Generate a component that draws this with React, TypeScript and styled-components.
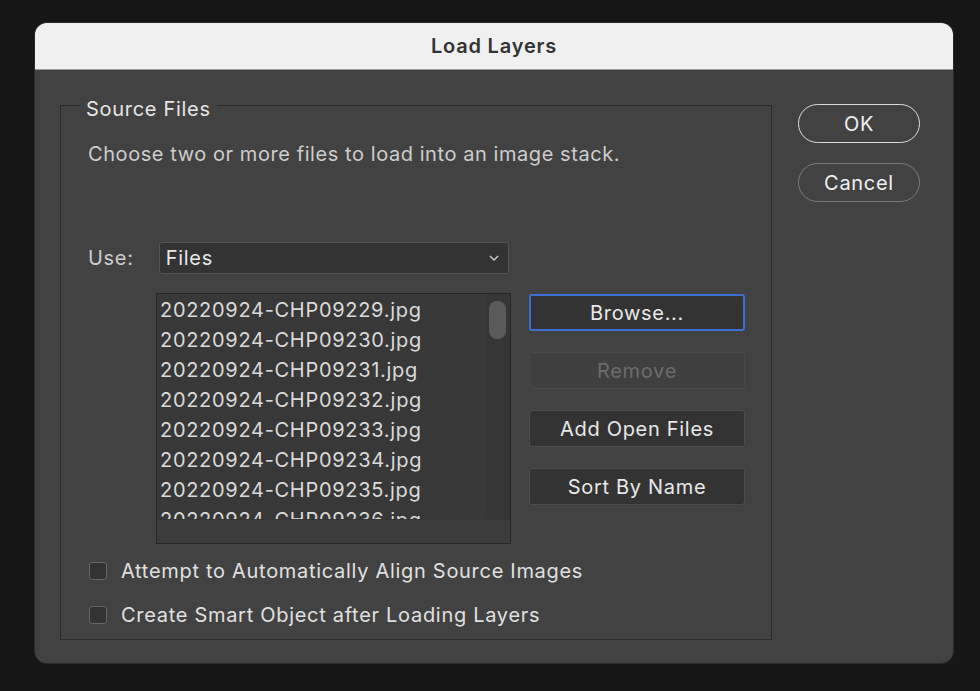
import React from "react";
import styled, { createGlobalStyle } from "styled-components";

const Global = createGlobalStyle`
  html, body { margin: 0; padding: 0; background: #161616; }
  body { font-family: Inter, "Liberation Sans", Arial, sans-serif; letter-spacing: 0.7px; }
`;

const Screen = styled.div`
  width: 980px;
  height: 691px;
  background: #161616;
  padding: 23px 27px 28px 35px;
  box-sizing: border-box;
`;

const Dialog = styled.div`
  width: 918px;
  height: 640px;
  border-radius: 12px;
  overflow: hidden;
  background: #424242;
  display: flex;
  flex-direction: column;
  box-shadow: 0 0 0 1px #2a2a2a;
`;

const TitleBar = styled.div`
  height: 46px;
  background: #f0f0f0;
  border-bottom: 1px solid #9a9a9a;
  display: flex;
  align-items: center;
  justify-content: center;
  font-weight: 600;
  font-size: 20px;
  letter-spacing: 0.8px;
  color: #333;
  flex-shrink: 0;
`;

const Body = styled.div`
  display: flex;
  padding: 20px 33px 0 25px;
  gap: 26px;
`;

const Group = styled.fieldset`
  margin: 0;
  width: 713px;
  height: 550px;
  box-sizing: border-box;
  border: 1px solid #2c2c2c;
  padding: 0;
`;

const Legend = styled.legend`
  padding: 7px 6px 0;
  margin-left: 19px;
  font-size: 20px;
  color: #e6e6e6;
  line-height: 24px;
`;

const Content = styled.div`
  padding-left: 27px;
  display: flex;
  flex-direction: column;
`;

const Description = styled.div`
  font-size: 20px;
  letter-spacing: 0.57px;
  color: #cdcdcd;
  margin-top: 21px;
  line-height: 24px;
`;

const UseRow = styled.div`
  display: flex;
  align-items: center;
  margin-top: 76px;
  gap: 25px;
`;

const Label = styled.span`
  font-size: 20px;
  color: #cdcdcd;
`;

const Select = styled.div`
  width: 350px;
  height: 32px;
  box-sizing: border-box;
  background: #333333;
  border: 1px solid #555;
  border-radius: 3px;
  display: flex;
  align-items: center;
  justify-content: space-between;
  padding: 0 8px 0 6px;
  font-size: 20px;
  color: #e8e8e8;
`;

const FilesRow = styled.div`
  display: flex;
  margin-top: 19px;
  margin-left: 68px;
  gap: 18px;
`;

const List = styled.div`
  width: 355px;
  height: 251px;
  box-sizing: border-box;
  background: #383838;
  border: 1px solid #272727;
  display: grid;
  grid-template-columns: 1fr 24px;
  grid-template-rows: 1fr 24px;
`;

const Items = styled.div`
  overflow: hidden;
  padding: 1px 0 0 3px;
`;

const Item = styled.div`
  font-size: 20px;
  line-height: 30px;
  color: #dadada;
  white-space: nowrap;
`;

const VTrack = styled.div`
  background: #363636;
  padding: 7px 4px 0 3px;
`;

const Thumb = styled.div`
  height: 38px;
  border-radius: 8px;
  background: #5b5b5b;
`;

const HTrack = styled.div`
  grid-column: 1 / 3;
  background: #3c3c3c;
  border-top: 1px solid #363636;
`;

const ButtonCol = styled.div`
  display: flex;
  flex-direction: column;
  gap: 21px;
  padding-top: 1px;
`;

const SideButton = styled.div<{ $focus?: boolean; $disabled?: boolean }>`
  width: 216px;
  height: 37px;
  box-sizing: border-box;
  border-radius: 3px;
  display: flex;
  align-items: center;
  justify-content: center;
  font-size: 20px;
  background: ${(p) => (p.$disabled ? "#404040" : "#333333")};
  color: ${(p) => (p.$disabled ? "#6c6c6c" : "#e8e8e8")};
  border: ${(p) =>
    p.$focus ? "2px solid #3b6fd4" : p.$disabled ? "1px solid #4a4a4a" : "1px solid #4d4d4d"};
`;

const Checks = styled.div`
  display: flex;
  flex-direction: column;
  gap: 22px;
  margin-top: 16px;
`;

const CheckRow = styled.label`
  display: flex;
  align-items: center;
  gap: 14px;
  font-size: 20px;
  line-height: 22px;
  color: #e0e0e0;
  margin-left: 1px;
`;

const Box = styled.span`
  width: 18px;
  height: 18px;
  box-sizing: border-box;
  border: 1px solid #666;
  border-radius: 3px;
  background: #333;
`;

const RightCol = styled.div`
  display: flex;
  flex-direction: column;
  gap: 20px;
  padding-top: 14px;
`;

const PillButton = styled.div<{ $primary?: boolean }>`
  width: 122px;
  height: 39px;
  box-sizing: border-box;
  border-radius: 20px;
  border: ${(p) => (p.$primary ? "1.5px solid #dcdcdc" : "1px solid #7a7a7a")};
  display: flex;
  align-items: center;
  justify-content: center;
  font-size: 20px;
  color: #f0f0f0;
`;

const files = [
  "20220924-CHP09229.jpg",
  "20220924-CHP09230.jpg",
  "20220924-CHP09231.jpg",
  "20220924-CHP09232.jpg",
  "20220924-CHP09233.jpg",
  "20220924-CHP09234.jpg",
  "20220924-CHP09235.jpg",
  "20220924-CHP09236.jpg",
];

export default function App() {
  return (
    <>
      <Global />
      <Screen>
        <Dialog>
          <TitleBar>Load Layers</TitleBar>
          <Body>
            <Group>
              <Legend>Source Files</Legend>
              <Content>
                <Description>Choose two or more files to load into an image stack.</Description>
                <UseRow>
                  <Label>Use:</Label>
                  <Select>
                    <span>Files</span>
                    <svg width="12" height="8" viewBox="0 0 12 8">
                      <path d="M2 2l4 4 4-4" fill="none" stroke="#cfcfcf" strokeWidth="1.4" />
                    </svg>
                  </Select>
                </UseRow>
                <FilesRow>
                  <List>
                    <Items>
                      {files.map((f) => (
                        <Item key={f}>{f}</Item>
                      ))}
                    </Items>
                    <VTrack>
                      <Thumb />
                    </VTrack>
                    <HTrack />
                  </List>
                  <ButtonCol>
                    <SideButton $focus>Browse...</SideButton>
                    <SideButton $disabled>Remove</SideButton>
                    <SideButton>Add Open Files</SideButton>
                    <SideButton>Sort By Name</SideButton>
                  </ButtonCol>
                </FilesRow>
                <Checks>
                  <CheckRow>
                    <Box />
                    Attempt to Automatically Align Source Images
                  </CheckRow>
                  <CheckRow>
                    <Box />
                    Create Smart Object after Loading Layers
                  </CheckRow>
                </Checks>
              </Content>
            </Group>
            <RightCol>
              <PillButton $primary>OK</PillButton>
              <PillButton>Cancel</PillButton>
            </RightCol>
          </Body>
        </Dialog>
      </Screen>
    </>
  );
}
